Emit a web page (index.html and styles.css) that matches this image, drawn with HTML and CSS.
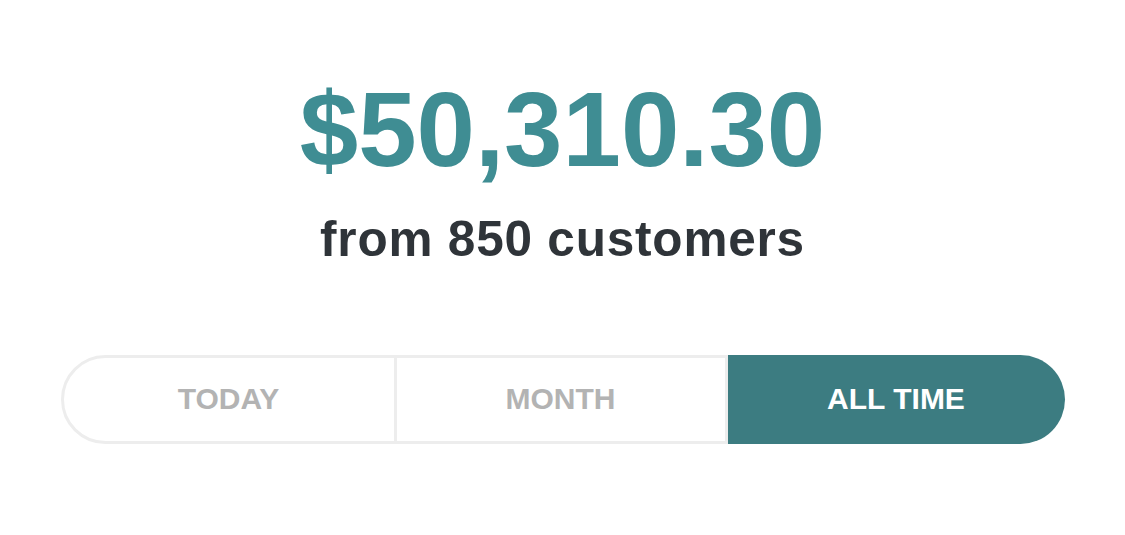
FILE: index.html
```html
<!DOCTYPE html>
<html lang="en">
<head>
  <meta charset="UTF-8" />
  <meta name="viewport" content="width=device-width, initial-scale=1.0"/>
  <title>Revenue</title>
  <link rel="stylesheet" href="styles.css">
</head>
<body>
  <div class="revenue">
    <div class="amount">$50,310.30</div>
    <div class="customers">from 850 customers</div>
    <div class="range">
      <button class="range-btn today">TODAY</button>
      <button class="range-btn month">MONTH</button>
      <button class="range-btn active">ALL TIME</button>
    </div>
  </div>
</body>
</html>
```

FILE: styles.css
```css
html, body {
  margin: 0;
  padding: 0;
  background: #fff;
  font-family: 'Liberation Sans', Arial, Helvetica, sans-serif;
}
.revenue {
  display: flex;
  flex-direction: column;
  align-items: center;
  padding-top: 77px;
}
.amount {
  font-size: 105px;
  line-height: 1;
  font-weight: bold;
  color: #3f8d93;
}
.customers {
  margin-top: 32px;
  font-size: 49.5px;
  line-height: 1;
  font-weight: bold;
  letter-spacing: 0.8px;
  color: #2f3439;
}
.range {
  display: flex;
  width: 1004px;
  height: 89px;
  margin-top: 91px;
}
.range-btn {
  box-sizing: border-box;
  height: 100%;
  font-family: inherit;
  font-size: 30px;
  font-weight: bold;
  color: #b3b3b3;
  background: #fff;
  border: 3px solid #ededed;
  border-left: none;
  padding: 0;
  cursor: pointer;
}
.range-btn.today {
  width: 336px;
  border-left: 3px solid #ededed;
  border-radius: 45px 0 0 45px;
}
.range-btn.month {
  width: 331px;
}
.range-btn.active {
  width: 337px;
  color: #fff;
  background: #3c7c81;
  border: none;
  border-radius: 0 45px 45px 0;
}
```
